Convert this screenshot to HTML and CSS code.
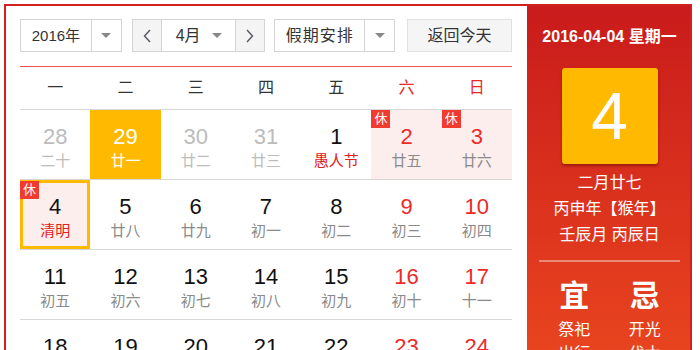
FILE: index.html
```html
<!DOCTYPE html>
<html>

<head>
    <meta charset="UTF-8">
    <title>万年历</title>
    <link rel="stylesheet" href="styles.css">
</head>

<body>
    <div class="calendar">
        <div class="main">
            <div class="toolbar">
                <div class="select year">
                    <span class="select_text">2016年</span>
                    <span class="select_arrow"><i class="caret"></i></span>
                </div>
                <div class="month_group">
                    <span class="step">
                        <svg width="8" height="14" viewBox="0 0 8 14"><path d="M7 1 L1.5 7 L7 13" fill="none" stroke="#556" stroke-width="1.4"/></svg>
                    </span>
                    <span class="month">
                        <span class="select_text">4月</span>
                        <i class="caret"></i>
                    </span>
                    <span class="step">
                        <svg width="8" height="14" viewBox="0 0 8 14"><path d="M1 1 L6.5 7 L1 13" fill="none" stroke="#556" stroke-width="1.4"/></svg>
                    </span>
                </div>
                <div class="select holiday">
                    <span class="select_text">假期安排</span>
                    <span class="select_arrow"><i class="caret"></i></span>
                </div>
                <div class="today_button">返回今天</div>
            </div>

            <div class="weekdays">
                <span>一</span><span>二</span><span>三</span><span>四</span><span>五</span><span class="weekend">六</span><span class="weekend">日</span>
            </div>

            <div class="week">
                <div class="day other"><b>28</b><small>二十</small></div>
                <div class="day other selected"><b>29</b><small>廿一</small></div>
                <div class="day other"><b>30</b><small>廿二</small></div>
                <div class="day other"><b>31</b><small>廿三</small></div>
                <div class="day festival"><b>1</b><small>愚人节</small></div>
                <div class="day weekend rest"><i class="badge">休</i><b>2</b><small>廿五</small></div>
                <div class="day weekend rest"><i class="badge">休</i><b>3</b><small>廿六</small></div>
            </div>
            <div class="week">
                <div class="day festival rest today"><i class="badge">休</i><b>4</b><small>清明</small></div>
                <div class="day"><b>5</b><small>廿八</small></div>
                <div class="day"><b>6</b><small>廿九</small></div>
                <div class="day"><b>7</b><small>初一</small></div>
                <div class="day"><b>8</b><small>初二</small></div>
                <div class="day weekend"><b>9</b><small>初三</small></div>
                <div class="day weekend"><b>10</b><small>初四</small></div>
            </div>
            <div class="week">
                <div class="day"><b>11</b><small>初五</small></div>
                <div class="day"><b>12</b><small>初六</small></div>
                <div class="day"><b>13</b><small>初七</small></div>
                <div class="day"><b>14</b><small>初八</small></div>
                <div class="day"><b>15</b><small>初九</small></div>
                <div class="day weekend"><b>16</b><small>初十</small></div>
                <div class="day weekend"><b>17</b><small>十一</small></div>
            </div>
            <div class="week">
                <div class="day"><b>18</b><small>十二</small></div>
                <div class="day"><b>19</b><small>十三</small></div>
                <div class="day"><b>20</b><small>十四</small></div>
                <div class="day"><b>21</b><small>十五</small></div>
                <div class="day"><b>22</b><small>十六</small></div>
                <div class="day weekend"><b>23</b><small>十七</small></div>
                <div class="day weekend"><b>24</b><small>十八</small></div>
            </div>
        </div>

        <div class="side">
            <p class="side_date">2016-04-04 星期一</p>
            <div class="big_day">4</div>
            <p class="lunar">二月廿七</p>
            <p class="lunar">丙申年【猴年】</p>
            <p class="lunar">壬辰月 丙辰日</p>
            <hr class="side_line">
            <div class="yiji">
                <div class="yiji_col">
                    <h3>宜</h3>
                    <p>祭祀</p>
                    <p>出行</p>
                </div>
                <div class="yiji_col">
                    <h3>忌</h3>
                    <p>开光</p>
                    <p>伐木</p>
                </div>
            </div>
        </div>
    </div>
</body>

</html>
```

FILE: styles.css
```css
* {
    margin: 0;
    padding: 0;
    box-sizing: border-box;
}

body {
    font-family: "Liberation Sans", "Noto Sans CJK SC", sans-serif;
    color: #333;
    background: white;
    overflow: hidden;
}

.calendar {
    display: flex;
    width: 688px;
    margin: 4px 0 0 4px;
    border: 2px solid #d21f1f;
    border-bottom: none;
}

.main {
    width: 521px;
    padding: 13px 15px 0 14px;
    background: white;
}

/* toolbar */

.toolbar {
    display: flex;
    height: 33px;
}

.select,
.month_group,
.today_button {
    display: flex;
    height: 33px;
    border: 1px solid #d4d4d4;
    font-size: 15px;
    line-height: 31px;
}

.select_text {
    flex: 1;
    text-align: center;
}

.select_arrow {
    width: 30px;
    border-left: 1px solid #d4d4d4;
    display: flex;
    align-items: center;
    justify-content: center;
}

.caret {
    display: inline-block;
    width: 0;
    height: 0;
    border-left: 5px solid transparent;
    border-right: 5px solid transparent;
    border-top: 5px solid #888;
}

.year {
    width: 102px;
    margin-right: 10px;
}

.month_group {
    width: 134px;
    margin-right: 9px;
}

.step {
    width: 28px;
    background: #f4f4f4;
    display: flex;
    align-items: center;
    justify-content: center;
}

.month {
    flex: 1;
    display: flex;
    align-items: center;
    padding-right: 13px;
    border-left: 1px solid #d4d4d4;
    border-right: 1px solid #d4d4d4;
}

.month .select_text {
    padding-left: 2px;
    font-size: 16px;
}

.holiday {
    width: 121px;
    margin-right: 12px;
    font-size: 16px;
}

.holiday .select_text {
    letter-spacing: 1px;
}

.today_button {
    width: 105px;
    justify-content: center;
    background: #f5f5f5;
    border-color: #e0e0e0;
    font-size: 16px;
}

/* grid */

.weekdays {
    display: grid;
    grid-template-columns: repeat(7, 1fr);
    margin-top: 14px;
    border-top: 1px solid #f25252;
    border-bottom: 1px solid #d8d8d8;
    height: 44px;
}

.weekdays span {
    text-align: center;
    font-size: 16px;
    line-height: 42px;
    color: #333;
}

.weekdays .weekend {
    color: #e62828;
}

.week {
    display: grid;
    grid-template-columns: repeat(7, 1fr);
    border-bottom: 1px solid #d8d8d8;
}

.day {
    position: relative;
    height: 69px;
    padding-top: 15px;
    text-align: center;
}

.day b {
    display: block;
    font-weight: normal;
    font-size: 22px;
    line-height: 24px;
    color: #111;
}

.day small {
    display: block;
    margin-top: 2px;
    font-size: 15px;
    line-height: 20px;
    color: #8a8a8a;
}

.day.weekend b {
    color: #ec2a2a;
}

.day.festival small {
    color: #e12020;
}

.day.other b,
.day.other small {
    color: #bcbcbc;
}

.day.rest {
    background: #fdeeee;
}

.day.selected {
    background: #ffba00;
}

.day.selected b,
.day.selected small {
    color: white;
}

.day.today {
    border: 3px solid #ffba00;
    padding-top: 12px;
}

.badge {
    position: absolute;
    top: 0;
    left: 0;
    width: 19px;
    height: 18px;
    background: #f23b2f;
    color: white;
    font-style: normal;
    font-size: 13px;
    line-height: 18px;
    text-align: center;
}

.today .badge {
    top: -2px;
    left: -3px;
}

/* side panel */

.side {
    flex: 1;
    height: 346px;
    padding: 21px 10px 0 12px;
    background: linear-gradient(#c91b1b, #e8441f);
    color: white;
    text-align: center;
}

.side_date {
    font-size: 16px;
    font-weight: bold;
    line-height: 20px;
}

.big_day {
    width: 96px;
    height: 96px;
    margin: 21px auto 6px;
    background: #ffba00;
    border-radius: 3px;
    box-shadow: 0 2px 3px rgba(90, 0, 0, 0.45);
    font-size: 66px;
    line-height: 96px;
}

.lunar {
    font-size: 16px;
    line-height: 26px;
}

.side_line {
    height: 2px;
    margin: 12px 0 0;
    border: none;
    background: rgba(255, 255, 255, 0.4);
}

.yiji {
    display: flex;
    margin-top: 16px;
}

.yiji_col {
    flex: 1;
}

.yiji_col h3 {
    font-size: 30px;
    line-height: 36px;
}

.yiji_col h3+p {
    margin-top: 4px;
}

.yiji_col p {
    font-size: 16px;
    line-height: 24px;
}
```
